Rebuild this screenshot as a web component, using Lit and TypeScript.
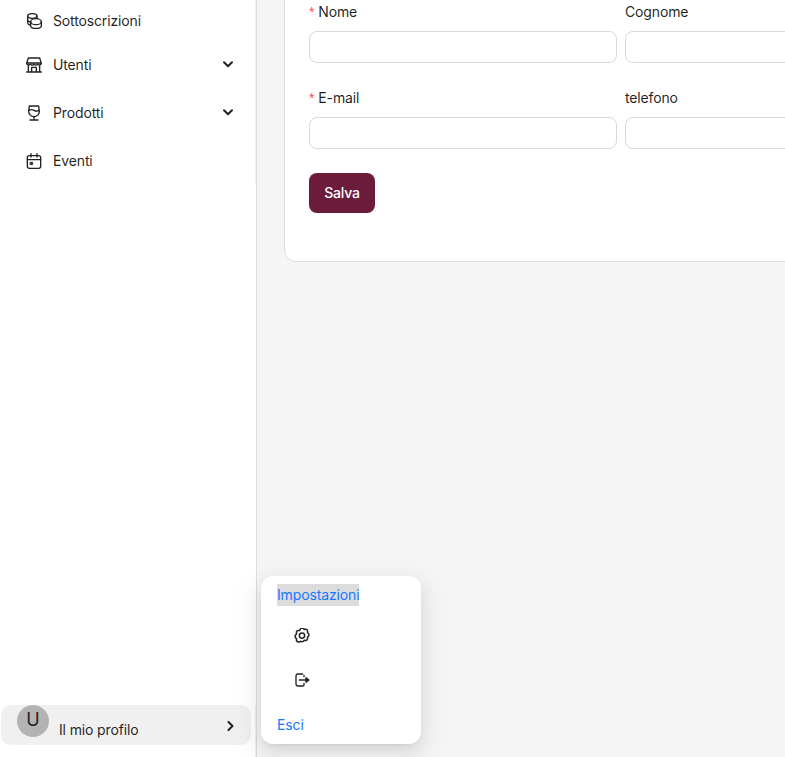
import { LitElement, html, css, svg } from "lit";
import { customElement } from "lit/decorators.js";

const icon = (paths: unknown, box = "0 0 24 24") => html`<svg class="ico" width="16" height="16" viewBox=${box} fill="none" stroke="currentColor" stroke-width="2" stroke-linecap="round" stroke-linejoin="round">${paths}</svg>`;

const coins = svg`<ellipse cx="9.500" cy="4.500" rx="7" ry="3.500"/><path d="M2.500 4.500v10c0 1.500 1.200 2.800 3.500 3.500M2.500 10c0 1.500 1.200 2.800 3.500 3.500M16.500 4.500v3.500"/><ellipse cx="15" cy="13" rx="8" ry="4.500"/><path d="M7 13v6c0 2.500 3.600 4 8 4s8-1.500 8-4v-6"/>`;
const store = svg`<path d="M3.500 1.500h17l2.500 8a3 3 0 0 1-5.500 1 3 3 0 0 1-5.500 0 3 3 0 0 1-5.500 0 3 3 0 0 1-5.500-1z"/><path d="M1 9h22M3.500 12.500V22.500h17V12.500M8.500 22.500v-7h7v7M1 22.500h22"/>`;
const wine = svg`<path d="M5 1.500h14l1 8a8 8 0 0 1-16 0z"/><path d="M12 17.500v5M6 22.500h12M4.500 8c2.500-1.500 5-1.500 7.500 0s5 1.500 7.500 0"/>`;
const cal = svg`<rect x="2" y="4" width="20" height="19" rx="3"/><path d="M7.500 1v5M16.500 1v5M2 10h20"/><rect x="6.500" y="14" width="3.500" height="3.500" fill="currentColor" stroke-width="1"/>`;
const gear = svg`<path d="M10.300 2.600a2.400 2.400 0 0 1 3.400 0l1.300 1.200 1.800-.100a2.400 2.400 0 0 1 2.500 2.500l-.100 1.800 1.200 1.300a2.400 2.400 0 0 1 0 3.400L19.200 14l.1 1.800a2.400 2.400 0 0 1-2.500 2.500l-1.800-.100-1.300 1.200a2.400 2.400 0 0 1-3.400 0L9 20.200l-1.800.1a2.400 2.400 0 0 1-2.500-2.500l.100-1.800-1.200-1.300a2.400 2.400 0 0 1 0-3.400L4.800 9.500l-.1-1.800a2.400 2.400 0 0 1 2.500-2.500L9 5.300z" transform="translate(0 -.500)"/><circle cx="12" cy="11.500" r="3.500"/>`;
const logout = svg`<path d="M13 3H6a3 3 0 0 0-3 3v12a3 3 0 0 0 3 3h7a2 2 0 0 0 2-2v-2M15 7V5"/><path d="M8 12h11"/><path d="M18 8.500l4.500 3.500-4.500 3.500z" fill="currentColor"/>`;
const chevDown = html`<svg class="chev" width="10" height="7" viewBox="0 0 10 7" fill="none" stroke="currentColor" stroke-width="2" stroke-linecap="round" stroke-linejoin="round"><path d="M1 1.200l4 4 4-4"/></svg>`;
const chevRight = html`<svg class="chev" width="7" height="10" viewBox="0 0 7 10" fill="none" stroke="currentColor" stroke-width="2" stroke-linecap="round" stroke-linejoin="round"><path d="M1.500 1l4 4-4 4"/></svg>`;

@customElement("app-root")
export class AppRoot extends LitElement {
  static styles = css`
    :host { display: block; height: 757px; overflow: hidden; position: relative; font-family: Inter, "Liberation Sans", sans-serif; font-size: 14px; line-height: 22px; letter-spacing: -.14px; color: rgba(0,0,0,.88); background: #f5f5f5; }
    .layout { display: flex; height: 757px; }
    .side { box-sizing: border-box; width: 257px; flex: none; background: #fff; border-right: 1px solid #ddd; display: flex; flex-direction: column; justify-content: space-between; }
    .nav { display: flex; flex-direction: column; padding-top: 1px; padding-bottom: 2px; border-right: 1px solid rgba(5,5,5,.06); }
    .item { height: 40px; display: flex; align-items: center; padding: 0 22px 0 26px; gap: 11px; margin-bottom: 8px; }
    .item:first-child { margin-bottom: 4px; }
    .item:last-child { margin-bottom: 0; }
    .item span { flex: 1; }
    .ico { display: block; flex: none; color: #222; }
    .chev { display: block; flex: none; color: #222; }
    .item .chev { margin-top: -2px; }
    .foot { padding: 0 4px 12px 1px; height: 40px; border-right: 1px solid rgba(5,5,5,.06); }
    .profile { height: 40px; border-radius: 10px; background: #f0f0f0; display: flex; align-items: flex-start; padding: 0 17px 0 16px; box-sizing: border-box; }
    .avatar { width: 32px; height: 32px; border-radius: 50%; background: #b3b3b3; color: #222; font-size: 18px; line-height: 30px; text-align: center; flex: none; }
    .pname { flex: 1; margin-left: 10px; margin-top: 14px; line-height: 22px; }
    .arrow { margin-top: 16px; }
    .main { flex: 1; min-width: 0; padding-left: 27px; }
    .card { box-sizing: border-box; width: 800px; height: 301px; margin-top: -39px; background: #fff; border: 1px solid #ddd; border-radius: 12px; padding: 39px 24px 0; }
    .grid { display: grid; grid-template-columns: 308px 308px; column-gap: 8px; row-gap: 24px; }
    .field label { display: block; height: 22px; margin-bottom: 8px; }
    .req { color: #ff4d4f; margin-right: 4px; font-family: "Liberation Sans", sans-serif; }
    .input { box-sizing: border-box; height: 32px; border: 1px solid #d9d9d9; border-radius: 8px; background: #fff; display: block; width: 100%; padding: 0; margin: 0; }
    .save { margin-top: 24px; width: 66px; height: 40px; border: 0; border-radius: 8px; background: #6d1b3b; color: #fff; font: 500 14px/22px Inter, sans-serif; letter-spacing: -.2px; display: block; padding: 0; }
    .pop { position: absolute; left: 261px; top: 576px; width: 160px; height: 168px; box-sizing: border-box; background: #fff; border-radius: 12px; box-shadow: 0 6px 16px rgba(0,0,0,.08), 0 3px 6px -4px rgba(0,0,0,.12), 0 9px 28px 8px rgba(0,0,0,.05); padding: 8px 16px; display: flex; flex-direction: column; }
    .link { color: #1677ff; line-height: 22px; display: block; }
    .sel { background: #dcdcdc; align-self: flex-start; }
    .act { height: 44px; display: flex; align-items: center; padding-left: 17px; }
    .acts { margin-top: 8px; }
    .esci { margin-top: 12px; }
  `;

  field(label: string, req: boolean) {
    return html`<div class="field"><label>${req ? html`<span class="req">*</span>` : ""}${label}</label><input class="input" /></div>`;
  }

  render() {
    return html`
      <div class="layout">
        <aside class="side">
          <nav class="nav">
            <div class="item">${icon(coins)}<span>Sottoscrizioni</span></div>
            <div class="item">${icon(store)}<span>Utenti</span>${chevDown}</div>
            <div class="item">${icon(wine)}<span>Prodotti</span>${chevDown}</div>
            <div class="item">${icon(cal)}<span>Eventi</span></div>
          </nav>
          <div class="foot">
            <div class="profile"><div class="avatar">U</div><div class="pname">Il mio profilo</div><div class="arrow">${chevRight}</div></div>
          </div>
        </aside>
        <main class="main">
          <section class="card">
            <div class="grid">
              ${this.field("Nome", true)}${this.field("Cognome", false)}
              ${this.field("E-mail", true)}${this.field("telefono", false)}
            </div>
            <button class="save">Salva</button>
          </section>
        </main>
      </div>
      <div class="pop">
        <span class="link sel">Impostazioni</span>
        <div class="acts">
          <div class="act">${icon(gear, "1.500 1.500 21 21")}</div>
          <div class="act">${icon(logout)}</div>
        </div>
        <span class="link esci">Esci</span>
      </div>
    `;
  }
}
